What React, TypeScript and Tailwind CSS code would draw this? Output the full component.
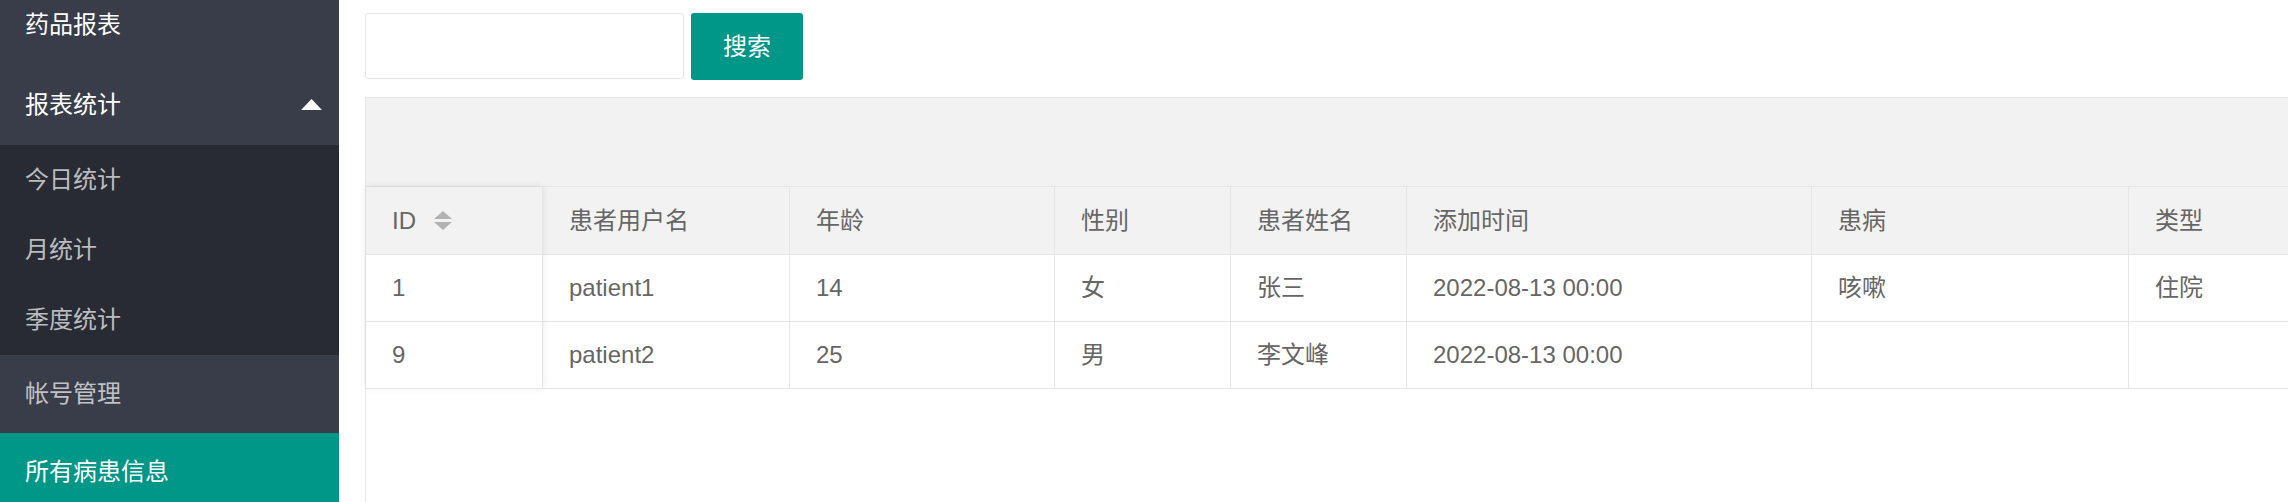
import { ReactNode } from "react";

const columns = [
  { key: "username", title: "患者用户名", width: "w-[247px]" },
  { key: "age", title: "年龄", width: "w-[265px]" },
  { key: "sex", title: "性别", width: "w-[176px]" },
  { key: "name", title: "患者姓名", width: "w-[176px]" },
  { key: "addtime", title: "添加时间", width: "w-[405px]" },
  { key: "illness", title: "患病", width: "w-[317px]" },
  { key: "type", title: "类型", width: "w-[320px]" },
];

const rows: Record<string, string>[] = [
  { id: "1", username: "patient1", age: "14", sex: "女", name: "张三", addtime: "2022-08-13 00:00", illness: "咳嗽", type: "住院" },
  { id: "9", username: "patient2", age: "25", sex: "男", name: "李文峰", addtime: "2022-08-13 00:00", illness: "", type: "" },
];

const Cell = ({ width, children }: { width: string; children?: ReactNode }) => (
  <div className={`${width} shrink-0 h-full flex items-center pl-[26px] border-r border-[#e6e6e6]`}>
    {children}
  </div>
);

const SortIcon = () => (
  <svg width="18" height="20" viewBox="0 0 18 20" className="ml-[18px]">
    <polygon points="0,8 9,0 18,8" fill="#b2b2b2" />
    <polygon points="0,11 18,11 9,19" fill="#b2b2b2" />
  </svg>
);

const Sidebar = () => (
  <aside className="w-[339px] shrink-0 bg-[#393d49] text-[24px] overflow-hidden">
    <div className="-mt-[14px]">
      <div className="h-[78px] flex items-center pl-[25px] text-white">药品报表</div>
      <div className="h-[81px] flex items-center justify-between pl-[25px] pr-[17px] text-white">
        <span>报表统计</span>
        <svg width="21" height="11" viewBox="0 0 21 11">
          <polygon points="0,11 10.5,0 21,11" fill="#ffffff" />
        </svg>
      </div>
      <div className="bg-[#282b33] text-white/70">
        <div className="h-[70px] flex items-center pl-[25px]">今日统计</div>
        <div className="h-[70px] flex items-center pl-[25px]">月统计</div>
        <div className="h-[70px] flex items-center pl-[25px]">季度统计</div>
      </div>
      <div className="h-[78px] flex items-center pl-[25px] text-white/70">帐号管理</div>
      <div className="h-[78px] flex items-center pl-[25px] bg-[#009688] text-white">所有病患信息</div>
    </div>
  </aside>
);

export default function App() {
  return (
    <div className="flex w-[2288px] h-[502px] overflow-hidden bg-white font-['Liberation_Sans','Noto_Sans_CJK_SC',sans-serif]">
      <Sidebar />

      <main className="flex-1 pl-[26px] pt-[13px] overflow-hidden">
        {/* search bar */}
        <div className="flex gap-[7px]">
          <input className="w-[319px] h-[66px] border border-[#e6e6e6] rounded-[3px] bg-white px-[16px] text-[24px] outline-none" />
          <button className="w-[112px] h-[67px] rounded-[3px] bg-[#009688] text-white text-[24px]">搜索</button>
        </div>

        {/* table */}
        <div className="mt-[17px] w-[2200px] h-[420px] border border-[#e6e6e6] text-[24px] text-[#666]">
          <div className="h-[89px] bg-[#f2f2f2] border-b border-[#e6e6e6]" />
          <div className="flex">
            {/* fixed ID column */}
            <div className="relative z-10 w-[177px] shrink-0 bg-white shadow-[0_-1px_8px_rgba(0,0,0,0.08)]">
              <div className="h-[68px] flex items-center pl-[26px] bg-[#f2f2f2] border-b border-r border-[#e6e6e6]">
                ID
                <SortIcon />
              </div>
              {rows.map((r) => (
                <div key={r.id} className="h-[67px] flex items-center pl-[26px] border-b border-r border-[#e6e6e6]">
                  {r.id}
                </div>
              ))}
            </div>

            {/* other columns */}
            <div className="flex-1">
              <div className="h-[68px] flex bg-[#f2f2f2] border-b border-[#e6e6e6]">
                {columns.map((c) => (
                  <Cell key={c.key} width={c.width}>{c.title}</Cell>
                ))}
              </div>
              {rows.map((r) => (
                <div key={r.id} className="h-[67px] flex border-b border-[#e6e6e6]">
                  {columns.map((c) => (
                    <Cell key={c.key} width={c.width}>{r[c.key]}</Cell>
                  ))}
                </div>
              ))}
            </div>
          </div>
        </div>
      </main>
    </div>
  );
}
